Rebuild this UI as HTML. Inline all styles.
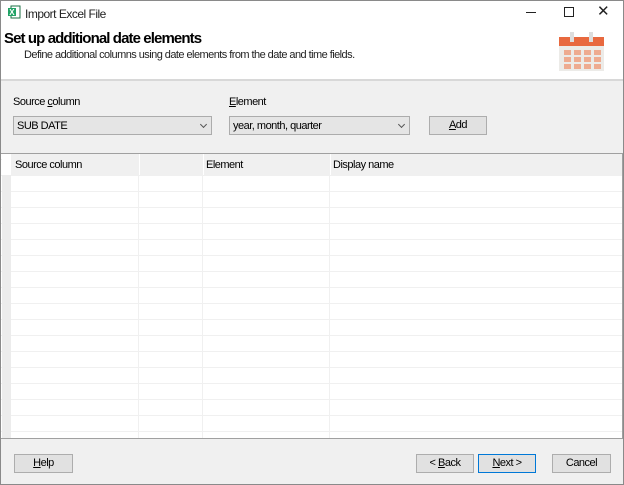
<!DOCTYPE html>
<html><head><style>
*{margin:0;padding:0;box-sizing:border-box}
body{width:624px;height:485px;overflow:hidden;font-family:"Liberation Sans",sans-serif;font-size:11px;color:#000;background:#f0f0f0;position:relative;letter-spacing:-0.5px}
.a{position:absolute}
.btn{position:absolute;background:#e1e1e1;border:1px solid #adadad;text-align:center;line-height:17px;font-size:11px}
.combo{position:absolute;background:#e5e5e5;border:1px solid #acacac;line-height:18px;padding-left:3px;font-size:11px}
.combo:after{content:"";position:absolute;right:5px;top:5px;width:4px;height:4px;border-right:1px solid #555;border-bottom:1px solid #555;transform:rotate(45deg)}
u{text-decoration:underline}
</style></head><body>
<div class="a" style="left:0;top:0;width:624px;height:485px;border:1px solid #8a8a8a"></div>
<div class="a" style="left:1px;top:1px;width:622px;height:79px;background:#fff"></div>
<div class="a" style="left:1px;top:79px;width:622px;height:2px;background:#d8d8d8"></div>
<svg class="a" style="left:7px;top:5px" width="14" height="14" viewBox="0 0 14 14"><rect x="4" y="1" width="9" height="12" fill="#fff" stroke="#1e7145"/><rect x="1" y="3" width="8" height="8" fill="#21a366"/><text x="2.2" y="10" font-size="8" font-weight="bold" fill="#fff" font-family="Liberation Sans">X</text></svg>
<div class="a" style="left:25px;top:7px;font-size:12px;color:#222">Import Excel File</div>
<div class="a" style="left:526px;top:12px;width:10px;height:1px;background:#222"></div>
<div class="a" style="left:564px;top:7px;width:10px;height:10px;border:1px solid #222"></div>
<div class="a" style="left:597px;top:2px;font-size:15px;color:#222">✕</div>
<div class="a" style="left:4px;top:30px;font-size:15px;font-weight:bold;letter-spacing:-0.9px">Set up additional date elements</div>
<div class="a" style="left:24px;top:49px;font-size:11px;color:#222;letter-spacing:-0.55px">Define additional columns using date elements from the date and time fields.</div>
<svg class="a" style="left:558px;top:31px" width="48" height="42">
<rect x="1" y="6" width="45" height="34" fill="#ecebe8"/><rect x="1" y="6" width="45" height="9" fill="#e8693f"/>
<rect x="12" y="1" width="4" height="10" fill="#ddd"/><rect x="31" y="1" width="4" height="10" fill="#ddd"/>
<g fill="#eeab90"><rect x="6" y="19" width="7" height="5"/><rect x="16" y="19" width="7" height="5"/><rect x="26" y="19" width="7" height="5"/><rect x="36" y="19" width="7" height="5"/>
<rect x="6" y="26" width="7" height="5"/><rect x="16" y="26" width="7" height="5"/><rect x="26" y="26" width="7" height="5"/><rect x="36" y="26" width="7" height="5"/>
<rect x="6" y="33" width="7" height="5"/><rect x="16" y="33" width="7" height="5"/><rect x="26" y="33" width="7" height="5"/><rect x="36" y="33" width="7" height="5"/></g></svg>
<div class="a" style="left:13px;top:96px">Source <u>c</u>olumn</div>
<div class="a" style="left:229px;top:96px"><u>E</u>lement</div>
<div class="combo" style="left:13px;top:116px;width:199px;height:19px">SUB DATE</div>
<div class="combo" style="left:229px;top:116px;width:181px;height:19px">year, month, quarter</div>
<div class="btn" style="left:429px;top:116px;width:58px;height:19px"><u>A</u>dd</div>
<div class="a" style="left:1px;top:153px;width:622px;height:286px;background:#fff;border-top:1px solid #a0a0a0;border-bottom:1px solid #a0a0a0;border-right:1px solid #a0a0a0;
background-image:linear-gradient(#f0f0f0 1px,transparent 1px);background-size:100% 16px;background-position:0 21px"></div>
<div class="a" style="left:2px;top:154px;width:620px;height:21px;background:#f0f0f0"></div>
<div class="a" style="left:2px;top:154px;width:9px;height:21px;background:#fff"></div>
<div class="a" style="left:2px;top:175px;width:9px;height:263px;background:#ececec"></div>
<div class="a" style="left:138px;top:154px;width:1px;height:284px;background:#f0f0f0"></div>
<div class="a" style="left:202px;top:154px;width:1px;height:284px;background:#f0f0f0"></div>
<div class="a" style="left:329px;top:154px;width:1px;height:284px;background:#f0f0f0"></div>
<div class="a" style="left:139px;top:154px;width:1px;height:21px;background:#fff"></div>
<div class="a" style="left:203px;top:154px;width:1px;height:21px;background:#fff"></div>
<div class="a" style="left:330px;top:154px;width:1px;height:21px;background:#fff"></div>
<div class="a" style="left:15px;top:159px">Source column</div>
<div class="a" style="left:206px;top:159px">Element</div>
<div class="a" style="left:333px;top:159px">Display name</div>
<div class="btn" style="left:14px;top:454px;width:59px;height:19px"><u>H</u>elp</div>
<div class="btn" style="left:416px;top:454px;width:58px;height:19px">&lt; <u>B</u>ack</div>
<div class="btn" style="left:478px;top:454px;width:58px;height:19px;border-color:#0078d7"><u>N</u>ext &gt;</div>
<div class="btn" style="left:552px;top:454px;width:59px;height:19px">Cancel</div>
</body></html>
